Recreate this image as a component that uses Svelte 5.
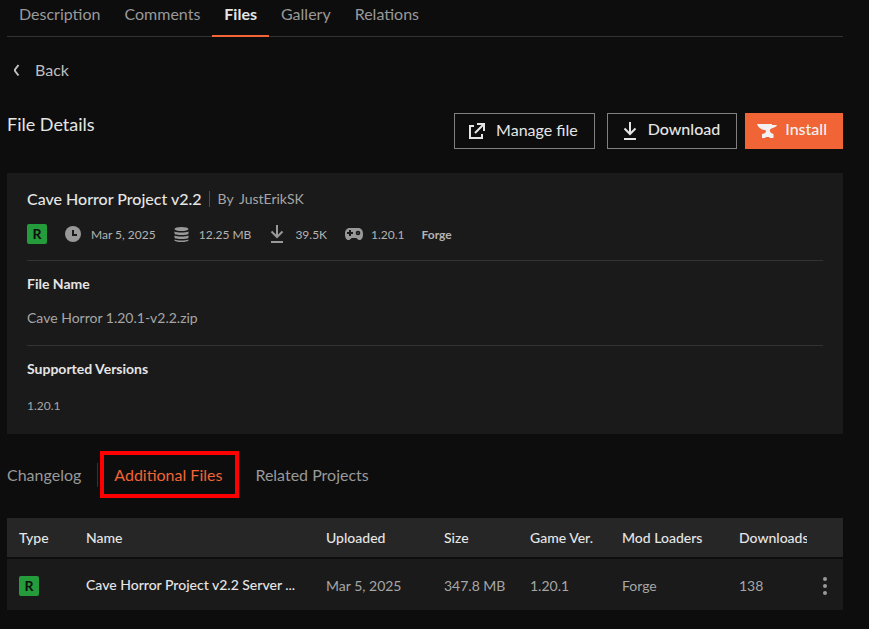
<script>
  const tabs = ["Description", "Comments", "Files", "Gallery", "Relations"];

  const file = {
    name: "Cave Horror Project v2.2",
    author: "JustErikSK",
    fileName: "Cave Horror 1.20.1-v2.2.zip",
    version: "1.20.1",
    loader: "Forge",
  };

  const additional = [
    {
      type: "R",
      name: "Cave Horror Project v2.2 Server ...",
      uploaded: "Mar 5, 2025",
      size: "347.8 MB",
      version: "1.20.1",
      loader: "Forge",
      downloads: "138",
    },
  ];

  let active = "Files";
</script>

{#snippet downloadIcon()}
  <svg class="icon-download" width="14" height="18" viewBox="0 0 14 18">
    <path
      d="M7 0v12M1.500 6.500 7 12l5.500-5.500M1 17h12"
      fill="none"
      stroke="currentColor"
      stroke-width="2"
    />
  </svg>
{/snippet}

<main class="page">
  <nav class="tabs">
    {#each tabs as tab}
      <a href="#{tab.toLowerCase()}" class="tab" class:active={tab === active}>
        {tab}
      </a>
    {/each}
  </nav>

  <a class="back" href="#files">
    <svg width="8" height="14" viewBox="0 0 8 14">
      <path
        d="M6.500 2 3 6.500v1.500L6.500 12.500"
        fill="none"
        stroke="currentColor"
        stroke-width="2"
      />
    </svg>
    Back
  </a>

  <header class="heading">
    <h2>File Details</h2>
    <div class="actions">
      <button class="button manage">
        <svg width="17" height="18" viewBox="0 0 17 18">
          <path
            d="M5 4H1v12h12v-4M8 2h7v7M14.500 2.500 6 11"
            fill="none"
            stroke="currentColor"
            stroke-width="2"
          />
        </svg>
        <span>Manage file</span>
      </button>
      <button class="button download">
        {@render downloadIcon()}
        <span>Download</span>
      </button>
      <button class="button install">
        <svg width="20" height="14" viewBox="0 0 20 14">
          <path
            d="M0 0h15v1h5c-.5 2-3 2.500-5 3.200-2 .8-2.500 1.800-2 3.300.5 1.200 1.500 2 3.500 2.500v4h-3.500l-1-1H9l-1 1H5v-4c2.500-.3 4-1.300 4-2.500 0-1-.5-1.500-1.500-1.500C4 5.500 1 3.500 0 0z"
            fill="currentColor"
          />
        </svg>
        <span>Install</span>
      </button>
    </div>
  </header>

  <section class="card">
    <div class="title">
      <h3>{file.name}</h3>
      <span class="by">By <a href="#author">{file.author}</a></span>
    </div>

    <ul class="meta">
      <li class="release">R</li>
      <li class="date">
        <svg width="16" height="16" viewBox="0 0 16 16">
          <circle cx="8" cy="8" r="8" fill="currentColor" />
          <path d="M8 4v5h4" fill="none" stroke="#1a1a1a" stroke-width="2" />
        </svg>
        <span>Mar 5, 2025</span>
      </li>
      <li class="size">
        <svg width="15" height="15" viewBox="0 0 15 15" fill="currentColor">
          <ellipse cx="7.500" cy="2" rx="7" ry="2" />
          <path d="M.5 4.500c3 1.300 11 1.300 14 0v2c0 2-14 2-14 0z" />
          <path d="M.5 8.500c3 1.300 11 1.300 14 0v2c0 2-14 2-14 0z" />
          <path d="M.5 12.500c3 1.300 11 1.300 14 0v.7c0 2.400-14 2.400-14 0z" />
        </svg>
        <span>12.25 MB</span>
      </li>
      <li class="count">
        {@render downloadIcon()}
        <span>39.5K</span>
      </li>
      <li class="game">
        <svg width="18" height="12" viewBox="0 0 18 12">
          <path
            d="M5 0h8c3.500 0 5 2.500 5 6s-1 6-3.500 6c-2 0-2.500-2-3.500-2H7c-1 0-1.500 2-3.500 2C1 12 0 9.500 0 6s1.500-6 5-6z"
            fill="currentColor"
          />
          <path d="M5 2v6M2 5h6" stroke="#1a1a1a" stroke-width="2" />
          <circle cx="13" cy="5" r="2.300" fill="#1a1a1a" />
          <circle cx="13" cy="5" r=".6" fill="currentColor" />
        </svg>
        <span>{file.version}</span>
      </li>
      <li class="loader"><span>{file.loader}</span></li>
    </ul>

    <div class="block">
      <h4>File Name</h4>
      <p>{file.fileName}</p>
    </div>
    <div class="block">
      <h4>Supported Versions</h4>
      <p class="small">{file.version}</p>
    </div>
  </section>

  <nav class="sections">
    <a class="changelog" href="#changelog">Changelog</a>
    <a class="highlighted" href="#additional">Additional Files</a>
    <a class="related" href="#related">Related Projects</a>
  </nav>

  <table>
    <thead>
      <tr>
        <th class="col-type">Type</th>
        <th>Name</th>
        <th class="col-uploaded">Uploaded</th>
        <th class="col-size">Size</th>
        <th class="col-version">Game Ver.</th>
        <th class="col-loader">Mod Loaders</th>
        <th class="col-downloads">Downloads</th>
        <th class="col-menu"></th>
      </tr>
    </thead>
    <tbody>
      {#each additional as row}
        <tr>
          <td><span class="release">{row.type}</span></td>
          <td class="name"><a href="#file">{row.name}</a></td>
          <td>{row.uploaded}</td>
          <td>{row.size}</td>
          <td>{row.version}</td>
          <td>{row.loader}</td>
          <td>{row.downloads}</td>
          <td>
            <button class="more" aria-label="More options">
              <svg width="4" height="18" viewBox="0 0 4 18" fill="currentColor">
                <circle cx="2" cy="2" r="2" />
                <circle cx="2" cy="9" r="2" />
                <circle cx="2" cy="16" r="2" />
              </svg>
            </button>
          </td>
        </tr>
      {/each}
    </tbody>
  </table>
</main>

<style>
  :global(body) {
    background-color: #0d0d0d;
  }

  .page {
    padding: 0 26px 18px 7px;

    font-family: Lato, sans-serif;
    font-size: 16px;
    line-height: 20px;
    color: #999;
  }

  h2,
  h3,
  h4,
  p,
  ul {
    margin: 0;
    padding: 0;
  }

  a {
    color: inherit;
    text-decoration: none;
  }

  svg {
    display: block;
    flex: none;
  }

  .tabs {
    display: flex;
    border-bottom: 1px solid #333;
  }

  .tab {
    padding: 4px 12px 12px;
  }

  .tab.active {
    margin-bottom: -1px;
    padding-bottom: 11px;

    border-bottom: 2px solid #f16436;
    font-weight: 700;
    color: #e5e5e5;
  }

  .back {
    width: max-content;
    margin: 23px 0 0 5px;

    display: flex;
    align-items: center;
    gap: 15px;
    color: #bfbfbf;
  }

  .heading {
    margin-top: 33px;

    display: flex;
    justify-content: space-between;
    align-items: flex-start;
  }

  .heading h2 {
    padding-top: 1px;

    font-size: 18px;
    font-weight: 400;
    color: #e5e5e5;
  }

  .actions {
    display: flex;
  }

  .button {
    box-sizing: border-box;
    height: 36px;
    padding: 0 16px;

    display: flex;
    align-items: center;
    gap: 10px;

    border: 1px solid #808080;
    background-color: transparent;
    font: inherit;
    color: #e5e5e5;
  }

  .manage {
    margin-right: 12px;
    padding-left: 14px;
  }

  .download {
    margin-right: 8px;
    padding-left: 15px;
    gap: 11px;
  }

  .download,
  .install {
    font-weight: 500;
  }

  .manage span {
    padding-bottom: 2px;
  }

  .download span,
  .install span {
    padding-bottom: 4px;
  }

  .install {
    padding: 0 16px 0 12px;
    gap: 8px;

    border: 0;
    background-color: #f16436;
    color: #f2f2f2;
  }

  .card {
    margin-top: 24px;
    padding: 16px 20px 18px;

    background-color: #1a1a1a;
  }

  .title {
    display: flex;
    align-items: center;
    gap: 7px;
  }

  .title h3 {
    font-size: 16px;
    font-weight: 500;
    color: #e5e5e5;
  }

  .by {
    padding-left: 8px;

    border-left: 1px solid #4d4d4d;
    font-size: 14px;
    line-height: 16px;
    color: #a6a6a6;
  }

  .by a {
    margin-left: 2px;
  }

  .meta {
    padding: 14px 0 15px;

    display: flex;
    align-items: center;
    list-style: none;
    font-size: 12px;
    color: #b3b3b3;
  }

  .meta li {
    display: flex;
    align-items: center;
    gap: 10px;
  }

  .meta span {
    padding-top: 2px;
  }

  .meta svg {
    color: #999;
  }

  .release {
    width: 20px;
    height: 20px;

    display: flex;
    justify-content: center;
    align-items: center;

    border-radius: 2px;
    background-color: #259c3b;
    font-size: 14px;
    font-weight: 700;
    color: #0d0d0d;
  }

  .meta .release {
    justify-content: center;
  }

  .meta .date,
  .meta .size,
  .meta .game {
    margin-left: 18px;
  }

  .meta .count {
    margin-left: 19px;
    gap: 11px;
  }

  .meta .game {
    gap: 8px;
  }

  .meta .loader {
    margin-left: 17px;

    font-weight: 700;
  }

  .block {
    padding-top: 13px;

    border-top: 1px solid #333;
    font-size: 14px;
    color: #a6a6a6;
  }

  .block h4 {
    font-weight: 700;
    color: #e5e5e5;
  }

  .block p {
    padding: 14px 0 17px;
  }

  .block .small {
    padding: 17px 0 0;

    font-size: 12px;
  }

  .sections {
    margin-top: 17px;

    display: flex;
    align-items: center;
  }

  .changelog {
    margin-right: 2px;
    padding: 2px 16px 2px 0;

    border-right: 1px solid #333;
  }

  .highlighted {
    padding: 10px 13px 9px 10px;

    border: 4px solid #f00;
    color: #f16436;
  }

  .related {
    padding-left: 16px;
  }

  table {
    width: 100%;
    margin-top: 20px;

    table-layout: fixed;
    border-collapse: collapse;
    font-size: 14px;
    text-align: left;
  }

  th,
  td {
    padding: 0 0 0 12px;

    overflow: hidden;
    white-space: nowrap;
  }

  th {
    height: 40px;
    box-sizing: border-box;

    background-color: #262626;
    font-weight: 500;
    color: #e5e5e5;
  }

  td {
    height: 48px;
    padding-top: 3px;

    border-top: 2px solid #0d0d0d;
    background-color: #1a1a1a;
    color: #a6a6a6;
  }

  .col-type {
    width: 67px;
  }

  .col-uploaded {
    width: 118px;
  }

  .col-size {
    width: 86px;
  }

  .col-version {
    width: 92px;
  }

  .col-loader {
    width: 117px;
  }

  .col-downloads {
    width: 80px;
  }

  .col-menu {
    width: 36px;
  }

  .name {
    padding-top: 1px;

    font-weight: 500;
    color: #e5e5e5;
  }

  .more {
    padding: 4px;

    display: block;
    border: 0;
    background-color: transparent;
    color: #999;
  }
</style>
